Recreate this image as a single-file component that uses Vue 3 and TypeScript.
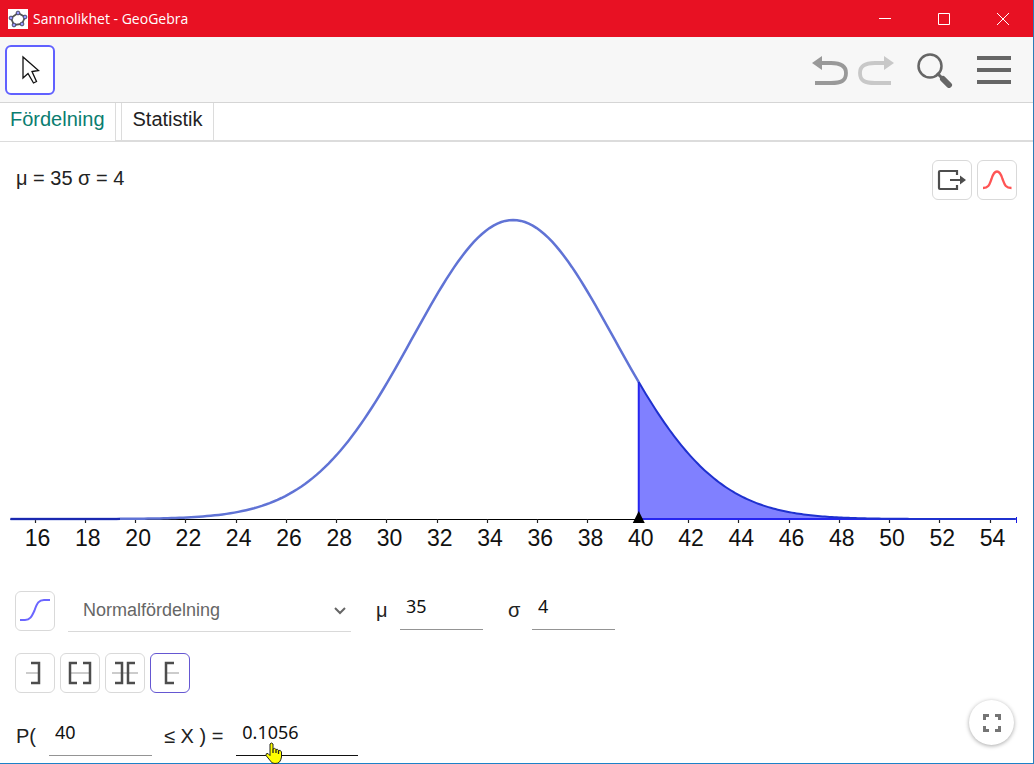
<script setup lang="ts">
import { computed, ref } from 'vue'

type Interval = 'left' | 'between' | 'tails' | 'right'

const tabs = ['Fördelning', 'Statistik']
const activeTab = ref('Fördelning')
const mu = ref('35')
const sigma = ref('4')
const lower = ref('40')
const result = ref('0.1056')
const distribution = ref('normal')
const interval = ref<Interval>('right')

const intervals: { id: Interval; label: string; axis: string; shape: string }[] = [
  { id: 'left', label: 'Vänstersidig', axis: 'M11 20H24', shape: 'M16 10H24V30H16' },
  { id: 'between', label: 'Intervall', axis: 'M10 20H30', shape: 'M17 10H10V30H17M23 10H30V30H23' },
  { id: 'tails', label: 'Tvåsidig', axis: 'M7 20H33', shape: 'M10 10H17V30H10M30 10H23V30H30' },
  { id: 'right', label: 'Högersidig', axis: 'M16 20H29', shape: 'M24 10H16V30H24' },
]

const base = 319
const unit = 25.13
const toX = (v: number) => 10.5 + (v - 15) * unit
const toY = (v: number) => base - 299 * Math.exp(-((v - 35) ** 2) / 32)

function trace(from: number, to: number): string {
  const points: string[] = []
  for (let i = 0; i <= 160; i++) {
    const v = from + ((to - from) * i) / 160
    points.push(`${toX(v).toFixed(2)} ${toY(v).toFixed(2)}`)
  }
  return 'M' + points.join('L')
}

const curve = trace(15, 40)
const tail = trace(40, 55)
const area = computed(() => `${tail}L${toX(55)} ${base}L${toX(40)} ${base}Z`)
const ticks = Array.from({ length: 20 }, (_, i) => 16 + i * 2)
</script>

<template>
  <div class="window">
    <header class="titlebar">
      <svg class="logo" viewBox="0 0 20 20" width="20" height="20" aria-hidden="true">
        <rect width="20" height="20" fill="#fff" />
        <path d="M10 4L17 8L14 15L6 16L3 9Z" fill="none" stroke="#555" stroke-width="1.800" />
        <g fill="#9999ff" stroke="#334" stroke-width=".8">
          <circle cx="10" cy="4" r="1.900" /><circle cx="17" cy="8" r="1.900" /><circle cx="14" cy="15" r="1.900" />
          <circle cx="6" cy="16" r="1.900" /><circle cx="3" cy="9" r="1.900" />
        </g>
      </svg>
      <span class="title">Sannolikhet - GeoGebra</span>
      <div class="winbuttons">
        <button aria-label="Minimera"><svg viewBox="0 0 12 12" width="12" height="12"><path d="M0 5.5H12" /></svg></button>
        <button aria-label="Maximera"><svg viewBox="0 0 12 12" width="12" height="12"><path d="M.5 .5H11.5V11.5H.5Z" /></svg></button>
        <button aria-label="Stäng"><svg viewBox="0 0 12 12" width="12" height="12"><path d="M0 0L12 12M12 0L0 12" /></svg></button>
      </div>
    </header>

    <div class="toolbar">
      <button class="tool" aria-label="Flytta">
        <svg viewBox="2 2 46 46" width="46" height="46">
          <path d="M18 12V33L23 28.500L28.500 38L31.500 36.500L27 26.500L33.500 25.500Z" fill="#fff" stroke="#111" stroke-width="1.300" />
        </svg>
      </button>
      <div class="actions">
        <button aria-label="Ångra">
          <svg viewBox="0 0 36 32" width="36" height="32">
            <path d="M9 9H19C29 9 34 12 34 19C34 27 29 29 19 29H3" fill="none" stroke="#999" stroke-width="3.800" />
            <path d="M0 9L10 2V16Z" fill="#999" />
          </svg>
        </button>
        <button class="redo" aria-label="Gör om">
          <svg viewBox="0 0 36 32" width="36" height="32">
            <path d="M27 9H17C7 9 2 12 2 19C2 27 7 29 17 29H33" fill="none" stroke="#c8c8c8" stroke-width="3.800" />
            <path d="M36 9L26 2V16Z" fill="#c8c8c8" />
          </svg>
        </button>
        <button class="search" aria-label="Sök">
          <svg viewBox="0 0 36 36" width="36" height="36">
            <circle cx="13" cy="14" r="11.500" fill="none" stroke="#666" stroke-width="2.500" />
            <path d="M20 21L27 28" stroke="#666" stroke-width="3" />
            <path d="M26 27L32 33" stroke="#666" stroke-width="6" stroke-linecap="round" />
          </svg>
        </button>
        <button class="menu" aria-label="Meny">
          <svg viewBox="0 0 34 30" width="34" height="30"><path d="M0 3H34M0 15H34M0 27H34" stroke="#666" stroke-width="4" /></svg>
        </button>
      </div>
    </div>

    <nav class="tabs" role="tablist">
      <button v-for="t in tabs" :key="t" role="tab" :aria-selected="t === activeTab" :class="{ active: t === activeTab }" @click="activeTab = t">{{ t }}</button>
    </nav>

    <main>
      <div class="summary">
        <span>μ = {{ mu }} σ = {{ sigma }}</span>
        <div class="buttons">
          <button class="square" aria-label="Exportera">
            <svg viewBox="1 1 38 38" width="38" height="38">
              <path d="M25 15V11H8Q7 11 7 12V28Q7 29 8 29H25V25" fill="none" stroke="#4d4d4d" stroke-width="2.200" />
              <path d="M18 20H30" stroke="#4d4d4d" stroke-width="2" />
              <path d="M28 15.500L34 20L28 24.500Z" fill="#4d4d4d" />
            </svg>
          </button>
          <button class="square" aria-label="Normalkurva">
            <svg viewBox="1 1 38 38" width="38" height="38">
              <path d="M6 28C12 28 12.500 24 14.500 19C16 14 17.500 11.500 20 11.500S24 14 25.500 19C27.500 24 28 28 34.500 28" fill="none" stroke="#ff5454" stroke-width="2.300" />
            </svg>
          </button>
        </div>
      </div>

      <svg class="chart" viewBox="0 0 1033 360" role="img" aria-label="Normalfördelning">
        <path :d="area" fill="#8080ff" />
        <path :d="`M10.5 ${base}.5H${toX(40)}`" stroke="#000" stroke-width="1.2" />
        <path v-for="t in ticks" :key="t" :d="`M${Math.round(toX(t)) - 0.5} ${base}V323`" stroke="#222" stroke-width="1.2" />
        <path :d="curve" class="curve" />
        <path :d="`M10.5 ${base}H120`" stroke="#1a28b0" stroke-width="2" />
        <path :d="`M${toX(40)} ${toY(40)}V${base}H${toX(55)}`" fill="none" stroke="#2626f0" stroke-width="2" />
        <path :d="tail" class="tail" />
        <path d="M1016.500 317V323" stroke="#1a1ae0" />
        <path :d="`M${toX(40)} 311L${toX(40) + 6} 323H${toX(40) - 6}Z`" fill="#000" />
        <text v-for="t in ticks" :key="t" :x="toX(t) + 2" y="346">{{ t }}</text>
      </svg>

      <section class="controls">
        <div class="row">
          <button class="square" aria-label="Kumulativ">
            <svg viewBox="1 1 38 38" width="38" height="38">
              <path d="M5 29H10C15 29 16.500 26 19.500 19.500C22 12 24 9 29 9H35" fill="none" stroke="#6b66ff" stroke-width="2" />
            </svg>
          </button>
          <div class="dropdown">
            <select v-model="distribution" aria-label="Fördelning">
              <option value="normal">Normalfördelning</option>
            </select>
            <svg viewBox="0 0 12 8" width="12" height="8"><path d="M1 1L6 6L11 1" fill="none" stroke="#666" stroke-width="2" /></svg>
          </div>
          <label class="param" for="mu">μ</label>
          <input id="mu" v-model="mu" class="short" type="text" />
          <label class="param" for="sigma">σ</label>
          <input id="sigma" v-model="sigma" class="short" type="text" />
        </div>

        <div class="row intervals">
          <button v-for="i in intervals" :key="i.id" class="square" :class="{ chosen: interval === i.id }" :aria-label="i.label" @click="interval = i.id">
            <svg viewBox="1 1 38 38" width="38" height="38">
              <path :d="i.axis" stroke="#ccc" stroke-width="2" />
              <path :d="i.shape" fill="none" stroke="#4d4d4d" stroke-width="2.500" />
            </svg>
          </button>
        </div>

        <div class="row probability">
          <label for="lower">P(</label>
          <input id="lower" v-model="lower" class="bound" type="text" />
          <label class="relation" for="result">≤ X ) =</label>
          <div class="answer">
            <input id="result" v-model="result" type="text" />
            <svg class="pointer" viewBox="0 0 18 22" width="18" height="22" aria-hidden="true">
              <path d="M5 2Q6.500 0 8 2V7Q9.500 5.500 11 7.500Q12.500 6.500 13.500 8.500Q15.500 7.500 16.500 10V15Q16 18 14.500 20Q13 21.500 10 21.500Q6.500 21.500 5.500 19L1 13.500Q.5 11 3 11.500L5 13.500Z" fill="#ff0" stroke="#222" stroke-width="1" />
              <path d="M8 7V11M11 8V11M13.500 8.500V12" stroke="#222" stroke-width="1.300" />
            </svg>
          </div>
        </div>
      </section>
    </main>

    <button class="fullscreen" aria-label="Helskärm">
      <svg viewBox="0 0 18 18" width="18" height="18"><path d="M1.500 6V1.500H6M12 1.500H16.500V6M16.500 12V16.500H12M6 16.500H1.500V12" fill="none" stroke="#757575" stroke-width="3" /></svg>
    </button>
  </div>
</template>

<style>
body {
  margin: 0;
}
</style>

<style scoped>
.window,
.window * {
  box-sizing: border-box;
}
.window {
  position: relative;
  min-height: 100vh;
  background: #fff;
  border-right: 1px solid #2b7cb8;
  border-bottom: 1px solid #1c82c8;
  font: 20px/24px "Liberation Sans", Arial, sans-serif;
  color: #222;
}
button {
  padding: 0;
  border: 0;
  background: none;
  font: inherit;
  color: inherit;
}
svg {
  display: block;
}
.titlebar {
  display: flex;
  align-items: center;
  height: 37px;
  padding-left: 8px;
  background: #e81123;
  color: #fff;
}
.title {
  margin-left: 5px;
  font: 14px/20px "Open Sans", sans-serif;
}
.winbuttons {
  display: flex;
  height: 100%;
  margin: 0 1px 0 auto;
}
.winbuttons button {
  display: grid;
  place-items: center;
  width: 59px;
}
.winbuttons path {
  fill: none;
  stroke: #fff;
}
.toolbar {
  display: flex;
  align-items: center;
  justify-content: space-between;
  height: 66px;
  padding: 0 22px 0 5px;
  background: #f7f7f7;
  border-bottom: 1px solid #d5d5d5;
}
.tool {
  display: grid;
  place-items: center;
  width: 50px;
  height: 50px;
  border: 2px solid #6161ff;
  border-radius: 6px;
  background: #fff;
}
.actions {
  display: flex;
  align-items: center;
}
.redo {
  margin-left: 10px;
}
.search {
  margin-left: 23px;
}
.menu {
  margin-left: 24px;
}
.tabs {
  display: flex;
  height: 39px;
  border-bottom: 1px solid #dcdcdc;
  box-shadow: inset 0 -1px #dcdcdc;
}
.tabs button {
  margin-right: 5px;
  padding: 0 10px 6px 11px;
  border: 1px solid #dcdcdc;
  border-width: 0 1px 1px;
}
.tabs .active {
  padding-left: 10px;
  border-width: 0 1px 0 0;
  background: #fff;
  color: #0a7d70;
}
.summary {
  display: flex;
  justify-content: space-between;
  padding: 18px 16px 0;
}
.summary span {
  padding-top: 6px;
}
.buttons {
  display: flex;
  gap: 5px;
}
.square {
  display: grid;
  place-items: center;
  flex: none;
  width: 40px;
  height: 40px;
  border: 1px solid #d9d9d9;
  border-radius: 6px;
  background: #fff;
}
.chosen {
  border-color: #6557d2;
}
.chart {
  width: 100%;
}
.chart text {
  font-size: 23px;
  text-anchor: middle;
  fill: #111;
}
.curve,
.tail {
  fill: none;
  stroke: #6073d5;
  stroke-width: 2.5;
}
.tail {
  stroke: #1f31cf;
  stroke-width: 2;
}
.controls {
  padding: 31px 16px 7px 15px;
}
.row {
  display: flex;
  align-items: flex-start;
}
.dropdown {
  display: flex;
  align-items: center;
  width: 283px;
  height: 41px;
  margin-left: 13px;
  padding-right: 5px;
  border-bottom: 1px solid #d9d9d9;
}
.dropdown select {
  flex: 1;
  appearance: none;
  padding: 0 0 2px 15px;
  border: 0;
  background: none;
  font: 18px/24px "Liberation Sans", Arial, sans-serif;
  color: #666;
}
label {
  line-height: 38px;
}
.param {
  width: 24px;
  margin-left: 25px;
}
input {
  width: 100%;
  height: 39px;
  padding: 0 6px 9px;
  border: 0;
  border-bottom: 1px solid #949494;
  background: none;
  font: 18px/24px "Noto Sans", sans-serif;
  color: #111;
}
.short {
  width: 83px;
}
.intervals {
  gap: 5px;
  margin-top: 21px;
}
.probability {
  margin-top: 24px;
  padding-left: 1px;
}
.bound {
  width: 103px;
  margin-left: 13px;
}
.relation {
  margin: 0 13px 0 12px;
}
.answer {
  position: relative;
  width: 122px;
}
.answer input {
  display: block;
  border-color: #111;
}
.pointer {
  position: absolute;
  left: 29px;
  top: 25px;
}
.fullscreen {
  position: absolute;
  right: 19px;
  bottom: 18px;
  display: grid;
  place-items: center;
  width: 45px;
  height: 45px;
  border-radius: 50%;
  background: #fff;
  box-shadow: 0 1px 4px rgba(0, 0, 0, 0.35);
}
</style>
